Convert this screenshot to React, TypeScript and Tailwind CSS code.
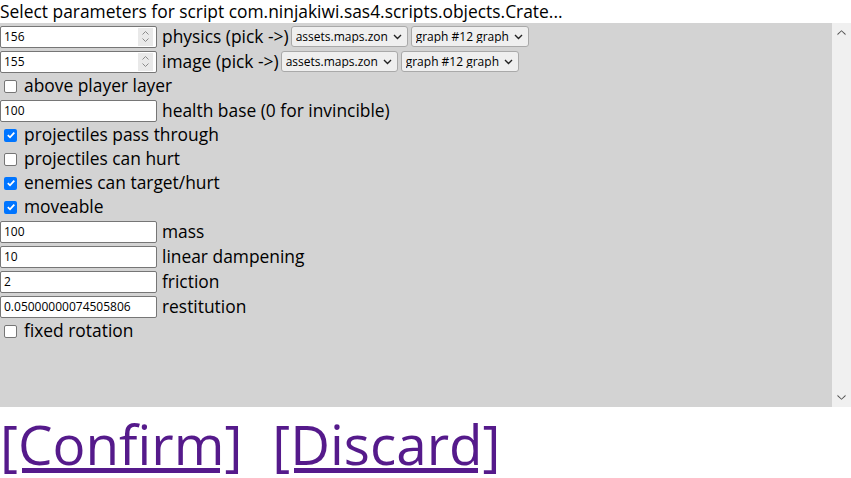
import React from "react";

const F = { fontFamily: '"Open Sans", "Noto Sans", sans-serif' };

function Chevron({ down }: { down?: boolean }) {
  return (
    <svg width="9" height="6" viewBox="0 0 9 6" className="block">
      {down ? (
        <path d="M0.5 0.8 L4.5 4.8 L8.5 0.8 L8.5 2.2 L4.5 5.8 L0.5 2.2 Z" fill="#505050" />
      ) : (
        <path d="M0.5 5.2 L4.5 1.2 L8.5 5.2 L8.5 3.8 L4.5 0.2 L0.5 3.8 Z" fill="#505050" />
      )}
    </svg>
  );
}

function NumInput({ value }: { value: string }) {
  return (
    <div className="flex items-center w-[157px] h-[22px] bg-white border border-[#767676] rounded-[2px] pl-[3px] pr-[3px] text-[12px] leading-none text-black shrink-0">
      <span className="flex-1">{value}</span>
      <div className="w-[15px] h-[18px] bg-[#e9e9e9] flex flex-col items-center justify-center gap-[3px]">
        <svg width="7" height="4" viewBox="0 0 7 4"><path d="M0.5 3.5 L3.5 0.5 L6.5 3.5" stroke="#8a8a8a" fill="none" strokeWidth="1" /></svg>
        <svg width="7" height="4" viewBox="0 0 7 4"><path d="M0.5 0.5 L3.5 3.5 L6.5 0.5" stroke="#8a8a8a" fill="none" strokeWidth="1" /></svg>
      </div>
    </div>
  );
}

function TextInput({ value }: { value: string }) {
  return (
    <div className="flex items-center w-[157px] h-[22px] bg-white border border-[#767676] rounded-[2px] pl-[3px] text-[12px] leading-none text-black shrink-0">
      {value}
    </div>
  );
}

function Select({ value, w }: { value: string; w: string }) {
  return (
    <div className={`flex items-center ${w} h-[21px] bg-[#efefef] border border-[#a9a9a9] rounded-[3px] pl-[4px] pr-[5px] text-[12px] leading-none text-black shrink-0 overflow-hidden`}>
      <span className="flex-1 overflow-hidden whitespace-nowrap">{value}</span>
      <svg width="9" height="6" viewBox="0 0 9 6" className="ml-[3px] shrink-0"><path d="M1 1 L4.5 4.5 L8 1" stroke="#222" strokeWidth="1.4" fill="none" /></svg>
    </div>
  );
}

function Check({ checked }: { checked?: boolean }) {
  return checked ? (
    <div className="w-[13px] h-[13px] rounded-[2px] bg-[#0075ff] flex items-center justify-center ml-[4px] mr-[7px] shrink-0">
      <svg width="10" height="10" viewBox="0 0 10 10"><path d="M1.8 5.2 L4 7.3 L8.3 2.6" stroke="#fff" strokeWidth="1.8" fill="none" /></svg>
    </div>
  ) : (
    <div className="w-[13px] h-[13px] rounded-[2px] bg-white border border-[#767676] ml-[4px] mr-[7px] shrink-0" />
  );
}

function InRow({ children }: { children: React.ReactNode }) {
  return <div className="flex items-center h-[25px]">{children}</div>;
}
function CbRow({ children }: { children: React.ReactNode }) {
  return <div className="flex items-center h-[24px]">{children}</div>;
}

function Label({ children }: { children: React.ReactNode }) {
  return <span className="text-[17.4px] text-black whitespace-nowrap leading-none">{children}</span>;
}

export default function App() {
  return (
    <div className="w-[851px] h-[478px] bg-white overflow-hidden" style={F}>
      <div className="h-[23px] text-[17.4px] leading-[23px] text-black whitespace-nowrap">
        Select parameters for script com.ninjakiwi.sas4.scripts.objects.Crate...
      </div>
      <div className="flex h-[384px] bg-[#d3d3d3]">
        <div className="flex-1 flex flex-col pt-[1px]">
          <InRow>
            <NumInput value="156" />
            <span className="ml-[5px]"><Label>physics (pick -&gt;)</Label></span>
            <span className="ml-[2px] flex gap-[3px]">
              <Select value="assets.maps.zon" w="w-[117px]" />
              <Select value="graph #12 graph" w="w-[118px]" />
            </span>
          </InRow>
          <InRow>
            <NumInput value="155" />
            <span className="ml-[5px]"><Label>image (pick -&gt;)</Label></span>
            <span className="ml-[2px] flex gap-[3px]">
              <Select value="assets.maps.zon" w="w-[117px]" />
              <Select value="graph #12 graph" w="w-[118px]" />
            </span>
          </InRow>
          <CbRow><Check /><Label>above player layer</Label></CbRow>
          <InRow><TextInput value="100" /><span className="ml-[5px]"><Label>health base (0 for invincible)</Label></span></InRow>
          <CbRow><Check checked /><Label>projectiles pass through</Label></CbRow>
          <CbRow><Check /><Label>projectiles can hurt</Label></CbRow>
          <CbRow><Check checked /><Label>enemies can target/hurt</Label></CbRow>
          <CbRow><Check checked /><Label>moveable</Label></CbRow>
          <InRow><TextInput value="100" /><span className="ml-[5px]"><Label>mass</Label></span></InRow>
          <InRow><TextInput value="10" /><span className="ml-[5px]"><Label>linear dampening</Label></span></InRow>
          <InRow><TextInput value="2" /><span className="ml-[5px]"><Label>friction</Label></span></InRow>
          <InRow><TextInput value="0.05000000074505806" /><span className="ml-[5px]"><Label>restitution</Label></span></InRow>
          <CbRow><Check /><Label>fixed rotation</Label></CbRow>
        </div>
        <div className="w-[19px] bg-[#f0f0f0] flex flex-col items-center justify-between py-[7px]">
          <Chevron />
          <Chevron down />
        </div>
      </div>
      <div className="flex gap-[30px] text-[54.8px] leading-none text-[#551a8b] whitespace-nowrap pt-[10px]">
        <a className="underline">[Confirm]</a>
        <a className="underline">[Discard]</a>
      </div>
    </div>
  );
}
